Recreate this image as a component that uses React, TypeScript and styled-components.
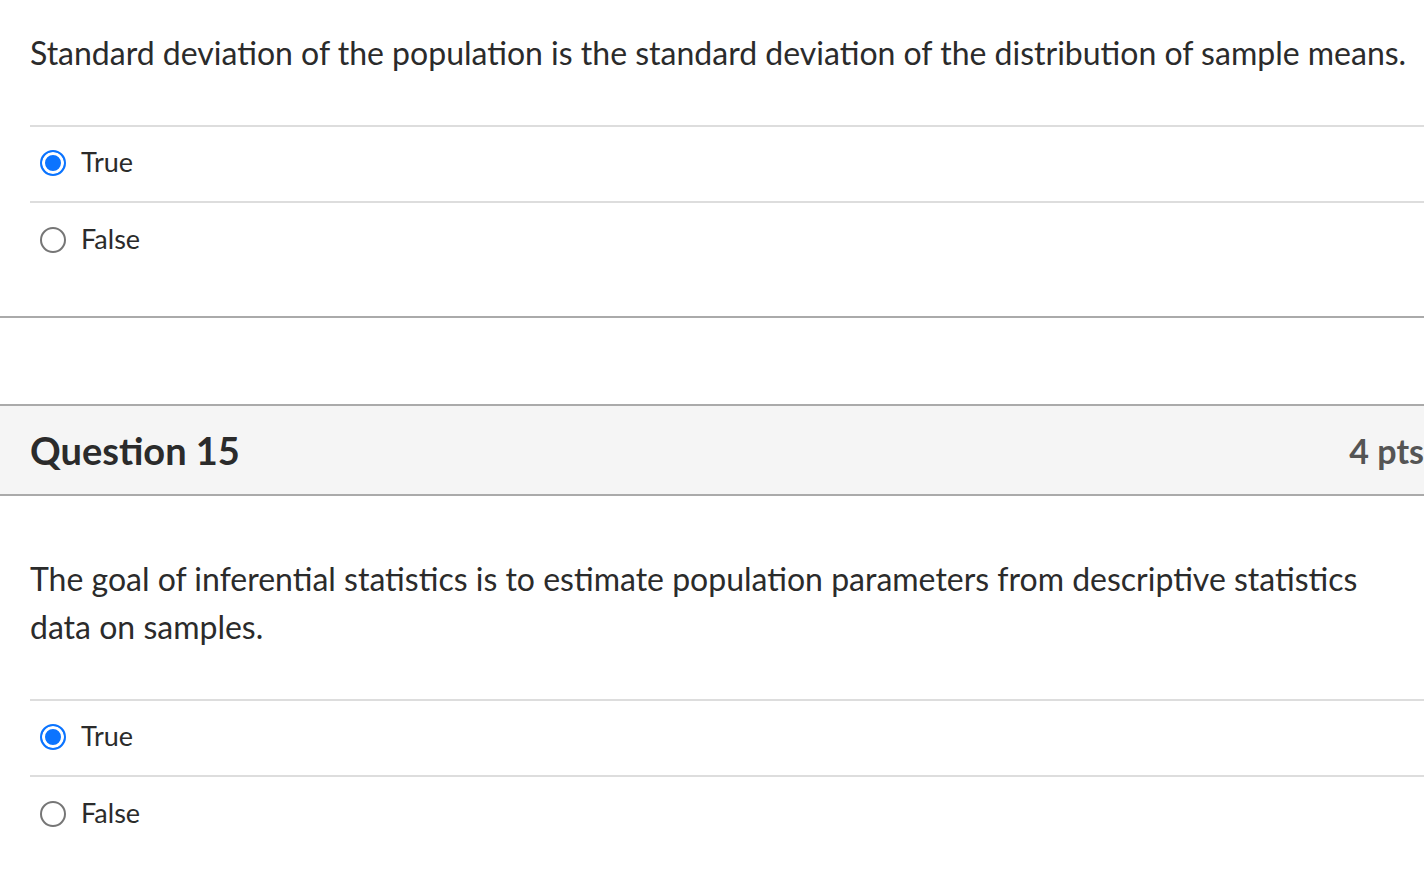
import React from "react";
import styled, { createGlobalStyle } from "styled-components";

const Global = createGlobalStyle`
  html, body { margin: 0; padding: 0; background: #fff; overflow: hidden; }
  body { font-family: Lato, "Noto Sans", sans-serif; color: #2b2b2b; }
`;

const Page = styled.div`
  width: 100%;
  padding-top: 29px;
`;

const QuestionBody = styled.div`
  padding-left: 30px;
`;

const QuestionText = styled.div`
  font-size: 32px;
  line-height: 48px;
  color: #2b2b2b;
  padding-right: 8px;
`;

const Answers = styled.div`
  margin-top: 48px;
  border-top: 2px solid #ddd;
`;

const AnswerRow = styled.label<{ $last?: boolean }>`
  display: flex;
  align-items: center;
  gap: 15px;
  box-sizing: border-box;
  height: 76px;
  padding: 0 0 6px 10px;
  border-bottom: ${(p) => (p.$last ? "none" : "2px solid #ddd")};
  font-size: 27px;
  color: #2b2b2b;
`;

const Radio = styled.span<{ $checked?: boolean }>`
  box-sizing: border-box;
  width: 26px;
  height: 26px;
  margin-top: 4px;
  border-radius: 50%;
  flex: none;
  border: 2px solid ${(p) => (p.$checked ? "#0b74ff" : "#767676")};
  background: ${(p) => (p.$checked ? "#0b74ff" : "#fff")};
  box-shadow: ${(p) => (p.$checked ? "inset 0 0 0 3px #fff" : "none")};
`;

const SectionEnd = styled.div`
  height: 37px;
  border-bottom: 2px solid #aaa;
`;

const Spacer = styled.div`
  height: 86px;
`;

const Header = styled.div`
  display: flex;
  align-items: center;
  justify-content: space-between;
  height: 88px;
  background: #f5f5f5;
  border-top: 2px solid #aaa;
  border-bottom: 2px solid #aaa;
  padding: 0 0 0 30px;
`;

const Title = styled.h2`
  margin: 0;
  font-size: 38px;
  font-weight: 700;
  color: #2b2b2b;
`;

const Points = styled.div`
  font-size: 34px;
  font-weight: 700;
  color: #555;
  white-space: nowrap;
`;

const Gap = styled.div`
  height: 59px;
`;

function AnswerList() {
  return (
    <Answers>
      <AnswerRow>
        <Radio $checked />
        True
      </AnswerRow>
      <AnswerRow $last>
        <Radio />
        False
      </AnswerRow>
    </Answers>
  );
}

export default function App() {
  return (
    <>
      <Global />
      <Page>
        <QuestionBody>
          <QuestionText>
            Standard deviation of the population is the standard deviation of the distribution of sample means.
          </QuestionText>
          <AnswerList />
        </QuestionBody>
        <SectionEnd />
        <Spacer />
        <Header>
          <Title>Question 15</Title>
          <Points>4 pts</Points>
        </Header>
        <Gap />
        <QuestionBody>
          <QuestionText>
            The goal of inferential statistics is to estimate population parameters from descriptive statistics data on samples.
          </QuestionText>
          <AnswerList />
        </QuestionBody>
      </Page>
    </>
  );
}
